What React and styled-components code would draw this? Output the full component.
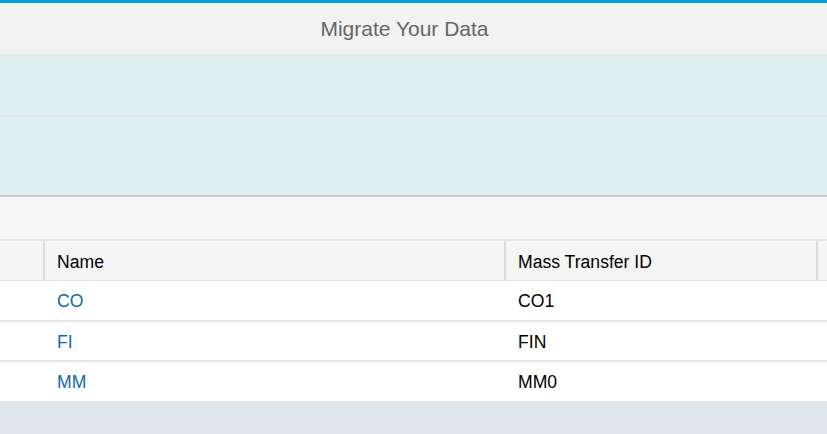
import React from "react";
import styled, { createGlobalStyle } from "styled-components";

const GlobalStyle = createGlobalStyle`
	html, body {
		margin: 0;
		padding: 0;
		background: #dfe6ec;
		font-family: "Liberation Sans", Arial, sans-serif;
	}
	#root {
		width: 827px;
		height: 434px;
		overflow: hidden;
	}
`;

const columns = [
	{ key: "sel", width: 45, label: "" },
	{ key: "name", width: 461, label: "Name" },
	{ key: "id", width: 312, label: "Mass Transfer ID" },
	{ key: "rest", width: 9, label: "" },
];

const rows = [
	{ name: "CO", id: "CO1" },
	{ name: "FI", id: "FIN" },
	{ name: "MM", id: "MM0" },
];

const App = () => {
	return (
		<Page>
			<GlobalStyle />
			<Shell>
				<Title>Migrate Your Data</Title>
			</Shell>

			<InfoStrip height="59" />
			<InfoStrip height="78" last />

			<Toolbar />

			<Table>
				<HeadRow>
					{columns.map((c, i) => (
						<HeadCell key={c.key} width={c.width} divider={i < columns.length - 1}>
							{c.label}
						</HeadCell>
					))}
				</HeadRow>
				{rows.map((r) => (
					<Row key={r.name}>
						<Cell width={45} />
						<Cell width={461}>
							<Link>{r.name}</Link>
						</Cell>
						<Cell width={312}>{r.id}</Cell>
					</Row>
				))}
			</Table>
		</Page>
	);
};

export default App;

const Page = styled.div`
	display: flex;
	flex-direction: column;
	width: 827px;
	height: 434px;
	background: #dfe6ec;
	border-top: 3px solid #009de0;
	box-sizing: border-box;
`;

const Shell = styled.header`
	display: flex;
	align-items: center;
	justify-content: center;
	height: 51px;
	padding-right: 18px;
	background: #f2f2f2;
	border-bottom: 2px solid #e7e5e5;
`;

const Title = styled.h1`
	margin: 0;
	font-size: 21px;
	font-weight: normal;
	color: #666666;
`;

const InfoStrip = styled.div`
	height: ${(props) => props.height}px;
	background: #deeff2;
	border-bottom: 2px solid ${(props) => (props.last ? "#c6cacb" : "#e5e7e7")};
`;

const Toolbar = styled.div`
	height: 42px;
	background: #f7f7f7;
	border-bottom: 2px solid #e5e5e5;
`;

const Table = styled.div`
	display: flex;
	flex-direction: column;
`;

const HeadRow = styled.div`
	display: flex;
	height: 39px;
	background: #f5f5f5;
	border-bottom: 1px solid #e5e5e5;
`;

const HeadCell = styled.div`
	display: flex;
	align-items: center;
	box-sizing: border-box;
	width: ${(props) => props.width}px;
	flex-shrink: 0;
	padding: 3px 0 0 12px;
	border-right: ${(props) => (props.divider ? "2px solid #dedede" : "none")};
	font-size: 17.6px;
	color: #000;
`;

const Row = styled.div`
	display: flex;
	height: 38.5px;
	background: #ffffff;
	border-bottom: 2px solid #e5e5e5;
`;

const Cell = styled.div`
	display: flex;
	align-items: center;
	box-sizing: border-box;
	width: ${(props) => props.width}px;
	flex-shrink: 0;
	padding: 3px 0 0 12px;
	font-size: 17.6px;
	color: #000;
`;

const Link = styled.span`
	color: #0f6aa6;
	cursor: pointer;
`;
